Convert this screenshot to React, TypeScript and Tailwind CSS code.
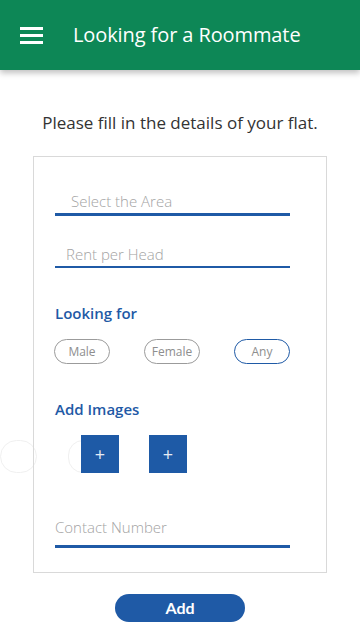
import React from 'react';

const fieldText = 'block text-[15px] leading-5 text-[#a3a3a3] font-light';

export default function App() {
  const pills = ['Male', 'Female', 'Any'];

  return (
    <div className="w-[360px] h-[640px] bg-white overflow-hidden relative" style={{ fontFamily: '"Open Sans", "Noto Sans", sans-serif' }}>
      {/* top bar */}
      <header className="h-[70px] bg-[#0d8756] flex items-center pl-5 shadow-[0_3px_6px_rgba(0,0,0,0.25)] relative z-10">
        <div className="flex flex-col gap-[4px] w-[23px]">
          <span className="block h-[3px] bg-white" />
          <span className="block h-[3px] bg-white" />
          <span className="block h-[3px] bg-white" />
        </div>
        <h1 className="ml-[30px] text-white text-[20px] leading-none tracking-[-0.1px]">Looking for a Roommate</h1>
      </header>

      <p className="mt-[41px] text-center text-[17px] leading-6 text-[#333]">Please fill in the details of your flat.</p>

      {/* faint ripple circles left of the image buttons */}
      <span className="absolute left-0 top-[440px] w-[37px] h-[33px] rounded-full border border-[#f0f0f0]" />
      <span className="absolute left-[68px] top-[440px] w-[30px] h-[33px] rounded-full border border-[#f0f0f0]" />

      <div className="relative mt-[21px] ml-[33px] w-[294px] h-[417px] border border-[#d9d9d9] px-[21px] leading-5">
        <div className="pt-[34px] w-[235px] border-b-[3px] border-[#1f5aa6] pb-[2px] pl-[16px]">
          <span className={fieldText}>Select the Area</span>
        </div>
        <div className="mt-[28px] w-[235px] border-b-2 border-[#1f5aa6] pb-[2px] pl-[11px]">
          <span className={fieldText}>Rent per Head</span>
        </div>

        <h2 className="mt-[35px] text-[15px] leading-5 font-semibold text-[#1f5aa6]">Looking for</h2>
        <div className="mt-[16px] -ml-px flex gap-[34px]">
          {pills.map((p) => (
            <span
              key={p}
              className={
                'w-[56px] h-[25px] rounded-full border flex items-center justify-center text-[12px] text-[#8e8e8e] ' +
                (p === 'Any' ? 'border-[#1f5aa6]' : 'border-[#9b9b9b]')
              }
            >
              {p}
            </span>
          ))}
        </div>

        <h2 className="mt-[35px] text-[15px] leading-5 font-semibold text-[#1f5aa6]">Add Images</h2>
        <div className="mt-[16px] ml-[26px] flex gap-[30px]">
          <button className="w-[38px] h-[38px] bg-[#1e5aa6] text-[#e6ecf5] text-[18px] leading-none flex items-center justify-center">+</button>
          <button className="w-[38px] h-[38px] bg-[#1e5aa6] text-[#e6ecf5] text-[18px] leading-none flex items-center justify-center">+</button>
        </div>

        <div className="mt-[44px] w-[235px] border-b-[3px] border-[#1f5aa6] pb-[8px]">
          <span className={fieldText}>Contact Number</span>
        </div>
      </div>

      <div className="mt-[21px] flex justify-center">
        <button
          className="w-[130px] h-[28px] rounded-full bg-[#1f5aa6] text-white text-[16px] font-bold leading-none"
          style={{ fontFamily: '"Lato", "Noto Sans", sans-serif' }}
        >
          Add
        </button>
      </div>
    </div>
  );
}
